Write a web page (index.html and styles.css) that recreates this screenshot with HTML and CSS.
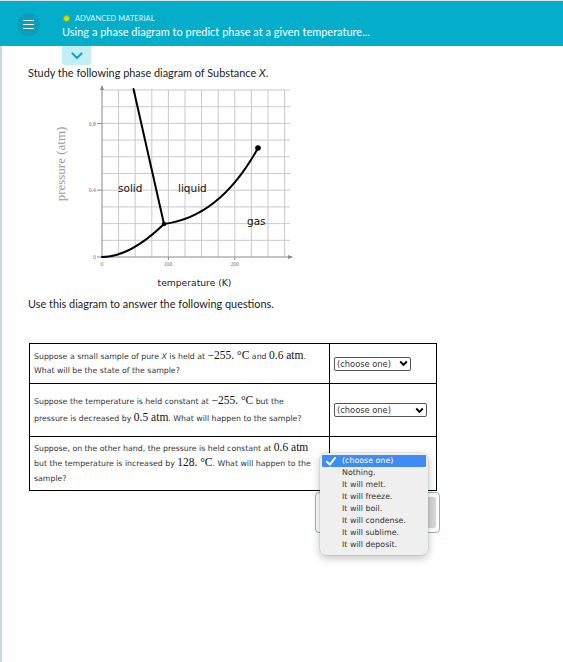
FILE: index.html
```html
<!DOCTYPE html>
<html>
<head>
<meta charset="utf-8">
<link rel="stylesheet" href="styles.css">
</head>
<body>
<div class="page">
  <header class="topbar">
    <div class="menu-btn">
      <span class="bar"></span><span class="bar"></span><span class="bar"></span>
    </div>
    <div class="titles">
      <div class="kicker"><span class="dot"></span>ADVANCED MATERIAL</div>
      <div class="title">Using a phase diagram to predict phase at a given temperature...</div>
    </div>
  </header>
  <div class="tab">
    <svg width="12" height="8" viewBox="0 0 12 8"><path d="M1.5 1.5 L6 6 L10.5 1.5" fill="none" stroke="#1aa3c4" stroke-width="2.2" stroke-linecap="round" stroke-linejoin="round"/></svg>
  </div>
  <main class="content">
    <p class="intro">Study the following phase diagram of Substance <i>X</i>.</p>
    <svg class="diagram" width="250" height="215" viewBox="50 78 250 215">
      <g stroke="#c9c9c9" stroke-width="1">
        <line x1="118.6" y1="88" x2="118.6" y2="255"/>
        <line x1="135.2" y1="88" x2="135.2" y2="255"/>
        <line x1="151.8" y1="88" x2="151.8" y2="255"/>
        <line x1="168.4" y1="88" x2="168.4" y2="255"/>
        <line x1="185" y1="88" x2="185" y2="255"/>
        <line x1="201.6" y1="88" x2="201.6" y2="255"/>
        <line x1="218.2" y1="88" x2="218.2" y2="255"/>
        <line x1="234.8" y1="88" x2="234.8" y2="255"/>
        <line x1="251.4" y1="88" x2="251.4" y2="255"/>
        <line x1="268" y1="88" x2="268" y2="255"/>
        <line x1="284.6" y1="88" x2="284.6" y2="255"/>
        <line x1="102" y1="238.3" x2="290" y2="238.3"/>
        <line x1="102" y1="221.6" x2="290" y2="221.6"/>
        <line x1="102" y1="204.9" x2="290" y2="204.9"/>
        <line x1="102" y1="188.2" x2="290" y2="188.2"/>
        <line x1="102" y1="171.5" x2="290" y2="171.5"/>
        <line x1="102" y1="154.8" x2="290" y2="154.8"/>
        <line x1="102" y1="138.1" x2="290" y2="138.1"/>
        <line x1="102" y1="121.4" x2="290" y2="121.4"/>
        <line x1="102" y1="104.7" x2="290" y2="104.7"/>
        <line x1="102" y1="88" x2="290" y2="88"/>
      </g>
      <g stroke="#8a8a8a" stroke-width="1">
        <line x1="102" y1="255" x2="102" y2="84"/>
        <line x1="102" y1="255" x2="292" y2="255"/>
        <line x1="97" y1="121.4" x2="102" y2="121.4"/>
        <line x1="97" y1="188.2" x2="102" y2="188.2"/>
        <line x1="97" y1="255" x2="102" y2="255"/>
        <line x1="168.4" y1="255" x2="168.4" y2="258"/>
        <line x1="234.8" y1="255" x2="234.8" y2="258"/>
      </g>
      <path d="M100 88 L102 83 L104 88 Z" fill="#8a8a8a"/>
      <path d="M288 253 L293 255 L288 257 Z" fill="#8a8a8a"/>
      <g class="ticks">
        <text x="96" y="123.5" text-anchor="end">0.8</text>
        <text x="96" y="190.3" text-anchor="end">0.4</text>
        <text x="96" y="257" text-anchor="end">0</text>
        <text x="102" y="264" text-anchor="middle">0</text>
        <text x="168" y="264" text-anchor="middle">100</text>
        <text x="234.8" y="264" text-anchor="middle">200</text>
      </g>
      <text class="ylabel" transform="translate(65 162) rotate(-90)" text-anchor="middle">pressure (atm)</text>
      <g fill="none" stroke="#000" stroke-width="2" stroke-linecap="round">
        <path d="M102 255 Q130 255 164 222"/>
        <path d="M164 222 L133.5 87"/>
        <path d="M164 222 Q220 215 258 146"/>
      </g>
      <circle cx="164" cy="222" r="2.2" fill="#000"/>
      <circle cx="258" cy="146" r="2.8" fill="#000"/>
      <g class="region">
        <text x="118" y="189.5">solid</text>
        <text x="178" y="189.5">liquid</text>
        <text x="247" y="223">gas</text>
      </g>
      <text class="xlabel" x="194.5" y="284" text-anchor="middle">temperature (K)</text>
    </svg>
    <p class="after">Use this diagram to answer the following questions.</p>

    <table class="qtable">
      <tr class="r1">
        <td class="q">Suppose a small sample of pure <i>X</i> is held at <span class="m">&minus;255. &deg;C</span> and <span class="m">0.6 atm</span>.<br>What will be the state of the sample?</td>
        <td class="a"><span class="sel sel1">(choose one)<svg width="9" height="7" viewBox="0 0 9 7"><path d="M1.2 1.5 L4.5 4.8 L7.8 1.5" fill="none" stroke="#000" stroke-width="1.9"/></svg></span></td>
      </tr>
      <tr class="r2">
        <td class="q">Suppose the temperature is held constant at <span class="m">&minus;255. &deg;C</span> but the<br>pressure is decreased by <span class="m">0.5 atm</span>. What will happen to the sample?</td>
        <td class="a"><span class="sel sel2">(choose one)<svg width="9" height="7" viewBox="0 0 9 7"><path d="M1.2 1.5 L4.5 4.8 L7.8 1.5" fill="none" stroke="#000" stroke-width="1.9"/></svg></span></td>
      </tr>
      <tr class="r3">
        <td class="q">Suppose, on the other hand, the pressure is held constant at <span class="m">0.6 atm</span><br>but the temperature is increased by <span class="m">128. &deg;C</span>. What will happen to the<br>sample?</td>
        <td class="a"></td>
      </tr>
    </table>
    <div class="actions">
      <div class="btn"><div class="btn-inner"></div></div>
    </div>
  </main>

  <ul class="dropdown">
    <li class="on"><svg width="10" height="9" viewBox="0 0 10 9"><path d="M1 4.8 L3.8 7.6 L9 1" fill="none" stroke="#fff" stroke-width="2" stroke-linecap="round" stroke-linejoin="round"/></svg>(choose one)</li>
    <li>Nothing.</li>
    <li>It will melt.</li>
    <li>It will freeze.</li>
    <li>It will boil.</li>
    <li>It will condense.</li>
    <li>It will sublime.</li>
    <li>It will deposit.</li>
  </ul>
</div>
</body>
</html>
```
FILE: styles.css
```css
* { box-sizing: border-box; }
html, body { margin: 0; padding: 0; background: #fff; }
body { font-family: "DejaVu Sans", Verdana, sans-serif; color: #222; }

.page {
  position: relative;
  width: 563px;
  min-height: 662px;
  border-left: 2px solid #c8d9e1;
}

.topbar {
  height: 46px;
  background: #04aecb;
  border-top: 1px solid #d6e3e8;
  display: flex;
  align-items: center;
  margin-left: -2px;
}
.menu-btn {
  width: 23px;
  height: 23px;
  border-radius: 50%;
  background: #079fbb;
  margin-left: 17px;
  margin-right: 22px;
  margin-top: 2px;
  display: flex;
  flex-direction: column;
  align-items: center;
  justify-content: center;
  gap: 2.5px;
}
.menu-btn .bar { width: 11px; height: 1.5px; background: #fff; display: block; }
.titles { display: flex; flex-direction: column; margin-top: 4px; }
.kicker {
  font-family: "Lato", sans-serif;
  font-size: 7.4px;
  color: #dff5f9;
  display: flex;
  align-items: center;
  letter-spacing: 0.1px;
  margin-left: 1px;
}
.kicker .dot {
  width: 7px; height: 7px; border-radius: 50%;
  background: #c6e10b;
  border: 1px solid #92b000;
  margin-right: 5px;
}
.title {
  font-family: "Lato", sans-serif;
  font-size: 10.9px;
  color: #fff;
  margin-top: 2px;
  letter-spacing: 0.05px;
}

.tab {
  width: 29px;
  height: 19px;
  margin-left: 60px;
  background: #c4eef6;
  border-radius: 0 0 3px 3px;
  display: flex;
  align-items: center;
  justify-content: center;
}

.content { padding-left: 26px; }
.intro {
  margin: 2px 0 0 0;
  font-family: "Lato", sans-serif;
  font-size: 10.9px;
  line-height: 12px;
  color: #222;
}
.diagram { display: block; margin: 1px 0 0 22px; }
.ticks text { font-family: "Liberation Serif", serif; font-size: 5.8px; fill: #777; }
.ylabel { font-family: "Liberation Serif", serif; font-size: 13px; fill: #9a9a9a; }
.region text { font-family: "DejaVu Sans", sans-serif; font-size: 10.5px; fill: #111; }
.xlabel { font-family: "DejaVu Sans", sans-serif; font-size: 9.2px; fill: #222; }

.after {
  margin: 3px 0 0 0;
  font-family: "Lato", sans-serif;
  font-size: 10.9px;
  line-height: 12px;
  color: #222;
}

.qtable {
  margin-top: 33px;
  margin-left: 1px;
  border-collapse: collapse;
  width: 408px;
}
.qtable td { border: 1px solid #000; vertical-align: middle; }
.qtable td.q {
  width: 300px;
  padding: 0 4px;
  font-size: 7.8px;
  color: #333;
}
.qtable td.a { padding: 0 0 0 4px; }
.r1 td { height: 40px; }
.r1 td.q { line-height: 14px; padding-top: 1px; }
.r2 td { height: 53px; }
.r2 td.q { line-height: 17px; }
.r3 td { height: 54px; }
.r3 td.q { line-height: 15px; }
.m { font-family: "Liberation Serif", serif; font-size: 11.5px; color: #111; line-height: 0; }

.sel {
  display: inline-flex;
  align-items: center;
  height: 14px;
  border: 1px solid #555;
  border-radius: 2px;
  font-size: 8.3px;
  line-height: 12px;
  color: #333;
  padding: 0 2px 0 2px;
  justify-content: space-between;
  gap: 3px;
  vertical-align: middle;
  position: relative;
  top: -1px;
}
.sel1 { width: 77px; }
.sel2 { width: 93px; }

.actions { width: 410px; display: flex; justify-content: flex-end; margin-top: 1px; }
.btn {
  width: 125px;
  height: 41px;
  border: 1px solid #8fb4c0;
  border-radius: 4px;
  padding: 4px 3px 4px 4px;
  margin-right: -2px;
}
.btn-inner { width: 100%; height: 100%; background: #d5d7d9; border-radius: 2px; }

.dropdown {
  position: absolute;
  left: 318px;
  top: 453px;
  width: 108px;
  margin: 0;
  padding: 2px 2px 4px 2px;
  list-style: none;
  background: #efefef;
  border-radius: 6px;
  box-shadow: 0 3px 8px rgba(0,0,0,0.25), 0 0 0 0.5px rgba(0,0,0,0.12);
  font-size: 7.9px;
  color: #333;
}
.dropdown li {
  height: 12px;
  line-height: 12px;
  padding-left: 20px;
  position: relative;
}
.dropdown li.on { background: #3f8cf3; color: #fff; border-radius: 1px; }
.dropdown li.on svg { position: absolute; left: 4px; top: 1.5px; }
```
